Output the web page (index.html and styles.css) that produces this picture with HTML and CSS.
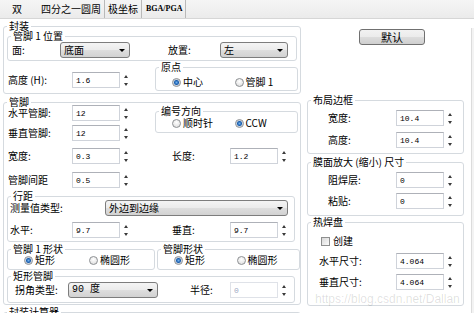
FILE: index.html
```html
<!DOCTYPE html>
<html lang="zh-CN">

<head>
    <meta charset="UTF-8">
    <title>封装向导</title>
    <link rel="stylesheet" href="styles.css">
</head>

<body>

    <div class="tabs">
        <span class="tab tab-first">双</span>
        <span class="tab tab-quarter">四分之一圆周</span>
        <span class="tab tab-polar">极坐标</span>
        <span class="tab tab-bga">BGA/PGA</span>
    </div>

    <div class="page">
        <div class="left">

            <!-- 封装 -->
            <div class="group pkg">
                <div class="group-title">封装</div>
                <div class="pkg-body">
                    <div class="group pos">
                        <div class="group-title">管脚 1 位置</div>
                        <div class="row pos-row">
                            <span class="lbl face-lbl">面:</span>
                            <div class="combo face-combo"><span>底面</span></div>
                            <span class="lbl place-lbl">放置:</span>
                            <div class="combo place-combo"><span>左</span></div>
                        </div>
                    </div>

                    <div class="split">
                        <div class="half height-half">
                            <div class="row">
                                <span class="lbl w64">高度 (H):</span>
                                <input class="num" value="1.6"><span class="spin"></span>
                            </div>
                        </div>
                        <div class="group side origin">
                            <div class="group-title">原点</div>
                            <div class="opts">
                                <span class="opt"><i class="radio on"></i>中心</span>
                                <span class="opt"><i class="radio"></i>管脚 1</span>
                            </div>
                        </div>
                    </div>
                </div>
            </div>

            <!-- 管脚 -->
            <div class="group pins">
                <div class="group-title">管脚</div>
                <div class="pins-body">
                    <div class="split block-a">
                        <div class="half">
                            <div class="row">
                                <span class="lbl w64">水平管脚:</span>
                                <input class="num" value="12"><span class="spin"></span>
                            </div>
                            <div class="row next">
                                <span class="lbl w64">垂直管脚:</span>
                                <input class="num" value="12"><span class="spin"></span>
                            </div>
                        </div>
                        <div class="group side direction">
                            <div class="group-title">编号方向</div>
                            <div class="opts">
                                <span class="opt"><i class="radio"></i>顺时针</span>
                                <span class="opt"><i class="radio on"></i>CCW</span>
                            </div>
                        </div>
                    </div>

                    <div class="row width-row">
                        <span class="lbl w64">宽度:</span>
                        <input class="num" value="0.3"><span class="spin"></span>
                        <span class="lbl far-lbl">长度:</span>
                        <input class="num" value="1.2"><span class="spin"></span>
                    </div>
                    <div class="row pitch-row">
                        <span class="lbl w64">管脚间距</span>
                        <input class="num" value="0.5"><span class="spin"></span>
                    </div>

                    <div class="group pitch">
                        <div class="group-title">行距</div>
                        <div class="pitch-body">
                            <div class="row measure-row">
                                <span class="lbl w95">测量值类型:</span>
                                <div class="combo measure-combo"><span>外边到边缘</span></div>
                            </div>
                            <div class="row offset-row">
                                <span class="lbl w62">水平:</span>
                                <input class="num" value="9.7"><span class="spin"></span>
                                <span class="lbl far-lbl">垂直:</span>
                                <input class="num" value="9.7"><span class="spin"></span>
                            </div>
                        </div>
                    </div>

                    <div class="shapes">
                        <div class="group shape-one">
                            <div class="group-title">管脚 1 形状</div>
                            <div class="opts">
                                <span class="opt"><i class="radio on"></i>矩形</span>
                                <span class="opt"><i class="radio"></i>椭圆形</span>
                            </div>
                        </div>
                        <div class="group side shape-all">
                            <div class="group-title">管脚形状</div>
                            <div class="opts">
                                <span class="opt"><i class="radio on"></i>矩形</span>
                                <span class="opt"><i class="radio"></i>椭圆形</span>
                            </div>
                        </div>
                    </div>

                    <div class="group rect">
                        <div class="group-title">矩形管脚</div>
                        <div class="row rect-row">
                            <span class="lbl w53">拐角类型:</span>
                            <div class="combo corner-combo"><span>90 度</span></div>
                            <span class="lbl radius-lbl">半径:</span>
                            <input class="num off" value="0" disabled><span class="spin"></span>
                        </div>
                    </div>
                </div>
            </div>

            <div class="group calc">
                <div class="group-title">封装计算器</div>
            </div>
        </div>

        <div class="right">
            <div class="btn">默认</div>

            <div class="group layout">
                <div class="group-title">布局边框</div>
                <div class="side-body">
                    <div class="row first">
                        <span class="lbl w68">宽度:</span>
                        <input class="num" value="10.4"><span class="spin"></span>
                    </div>
                    <div class="row gap6">
                        <span class="lbl w68">高度:</span>
                        <input class="num" value="10.4"><span class="spin"></span>
                    </div>
                </div>
            </div>

            <div class="group mask">
                <div class="group-title">膜面放大 (缩小) 尺寸</div>
                <div class="side-body">
                    <div class="row first">
                        <span class="lbl w68">阻焊层:</span>
                        <input class="num" value="0"><span class="spin"></span>
                    </div>
                    <div class="row gap5">
                        <span class="lbl w68">粘贴:</span>
                        <input class="num" value="0"><span class="spin"></span>
                    </div>
                </div>
            </div>

            <div class="group thermal">
                <div class="group-title">热焊盘</div>
                <div class="thermal-body">
                    <div class="check-row"><i class="check"></i>创建</div>
                    <div class="row gap6">
                        <span class="lbl w77">水平尺寸:</span>
                        <input class="num" value="4.064"><span class="spin"></span>
                    </div>
                    <div class="row gap5">
                        <span class="lbl w77">垂直尺寸:</span>
                        <input class="num" value="4.064"><span class="spin"></span>
                    </div>
                </div>
            </div>
        </div>

        <div class="edge"></div>
    </div>

    <div class="watermark">https://blog.csdn.net/Dallan</div>

</body>

</html>
```

FILE: styles.css
```css
body {
    margin: 0;
    width: 474px;
    height: 313px;
    overflow: hidden;
    position: relative;
    background-color: #ffffff;
    font-family: "Noto Sans CJK SC", sans-serif;
    font-size: 10px;
    color: #000;
}

/* tab strip */
.tabs {
    display: flex;
    height: 18px;
    line-height: 18px;
    background: linear-gradient(#f5f5f5, #ebebeb);
    border-bottom: 1px solid #d6d6d6;
}

.tab {
    padding: 0 3px;
    border-right: 1px solid #b9b9b9;
    white-space: nowrap;
}

.tab-first {
    width: 21px;
    padding-left: 12px;
    padding-right: 0;
    border-right: none;
}

.tab-quarter {
    padding-left: 8px;
}

.tab-bga {
    padding-left: 4px;
    font-family: "Liberation Serif", serif;
    font-size: 8px;
    font-weight: bold;
}

.page {
    display: flex;
    align-items: flex-start;
    height: 294px;
    overflow: hidden;
}

.left {
    width: 298px;
    margin-left: 3px;
}

.right {
    width: 158px;
    margin-left: 6px;
}

.edge {
    width: 2px;
    height: 290px;
    margin: 9px 0 0 7px;
    border-left: 1px solid #dcdcdc;
    background-color: #f3f3f3;
}

/* group boxes */
.group {
    border: 1px solid #d5dadf;
    border-radius: 3px;
}

.group-title {
    width: max-content;
    height: 10px;
    line-height: 10px;
    margin: -6px 0 0 3px;
    padding: 0 2px;
    background-color: #fff;
    white-space: nowrap;
}

.pkg {
    margin-top: 7px;
}

.pkg-body {
    padding: 0 3px 2px;
}

.pos {
    margin-top: 5px;
}

.pos-row {
    margin: 1px 0 2px 4px;
}

.split {
    display: flex;
    align-items: flex-start;
}

.half {
    width: 148px;
    flex: none;
}

.height-half {
    padding-top: 11px;
}

.side {
    width: 141px;
    flex: none;
}

.origin {
    margin-top: 6px;
}

.origin .opts {
    margin: 4px 0 2px;
}

.pins {
    margin-top: 8px;
}

.pins-body {
    padding: 0 5px 1px 3px;
}

.block-a {
    margin-top: -2px;
}

.direction {
    margin-top: 6px;
}

.direction .opts {
    margin: 1px 0 3px;
}

.width-row {
    margin-top: 7px;
}

.pitch-row {
    margin-top: 8px;
}

.pitch {
    margin-top: 8px;
}

.pitch-body {
    padding: 0 0 3px 2px;
}

.measure-row {
    margin-top: -1px;
}

.offset-row {
    margin-top: 6px;
}

.shapes {
    display: flex;
    gap: 2px;
    margin-top: 7px;
}

.shape-one {
    width: 146px;
    flex: none;
}

.shapes .opts {
    margin: 0 0 3px;
}

.shape-one .opts {
    padding-left: 16px;
}

.rect {
    margin-top: 6px;
}

.rect-row {
    margin: 1px 0 4px 7px;
}

.calc {
    margin-top: 7px;
    height: 20px;
}

/* rows and fields */
.row {
    display: flex;
    align-items: center;
    height: 16px;
}

.half .row,
.pins-body > .row {
    margin-left: 1px;
}

.row.next {
    margin-top: 4px;
}

.lbl {
    flex: none;
    line-height: 12px;
    white-space: nowrap;
}

.w53 { width: 53px; }
.w62 { width: 62px; }
.w64 { width: 64px; }
.w68 { width: 68px; }
.w77 { width: 77px; }
.w95 { width: 95px; }

.face-lbl {
    width: 48px;
}

.place-lbl {
    width: 52px;
    margin-left: 38px;
}

.far-lbl {
    width: 58px;
    margin-left: 42px;
}

.radius-lbl {
    width: 40px;
    margin-left: 32px;
}

.num {
    width: 48px;
    height: 16px;
    box-sizing: border-box;
    margin: 0;
    padding: 0 3px;
    border: 1px solid #cfd3da;
    border-top-color: #aeb1b8;
    background-color: #fff;
    font-family: "Liberation Mono", monospace;
    font-size: 8px;
    color: #000;
    outline: none;
}

.num.off {
    color: #9eaac4;
    border-color: #dfe2e8;
}

.spin {
    width: 9px;
    height: 16px;
    margin-left: 1px;
    display: flex;
    flex-direction: column;
    align-items: center;
    justify-content: space-around;
    flex: none;
}

.spin::before,
.spin::after {
    content: "";
    border-left: 2px solid transparent;
    border-right: 2px solid transparent;
}

.spin::before {
    border-bottom: 3px solid #3a3a3a;
}

.spin::after {
    border-top: 3px solid #3a3a3a;
}

.combo {
    height: 16px;
    box-sizing: border-box;
    display: flex;
    align-items: center;
    padding-left: 3px;
    border: 1px solid #7d7d7d;
    border-radius: 3px;
    background: linear-gradient(#f4f4f4, #ebebeb 50%, #dedede 50%, #d2d2d2);
    line-height: 12px;
    flex: none;
}

.combo::after {
    content: "";
    margin-left: auto;
    margin-right: 4px;
    border-left: 3px solid transparent;
    border-right: 3px solid transparent;
    border-top: 3px solid #000;
}

.face-combo {
    width: 70px;
}

.place-combo {
    width: 68px;
}

.measure-combo {
    width: 183px;
}

.corner-combo {
    width: 90px;
    font-family: "Liberation Mono", "Noto Sans CJK SC", monospace;
}

/* radios and checkbox */
.opts {
    display: flex;
    height: 12px;
    line-height: 12px;
    align-items: center;
    padding-left: 16px;
}

.opt {
    display: flex;
    align-items: center;
    width: 67px;
    white-space: nowrap;
}

.radio {
    width: 9px;
    height: 9px;
    box-sizing: border-box;
    margin-right: 2px;
    border: 1px solid #8d9093;
    border-radius: 50%;
    background: radial-gradient(circle at 50% 35%, #ffffff, #d9d9d9);
}

.radio.on {
    background: radial-gradient(circle, #6fb0ee 0, #1c5fae 2px, #c9d3df 3px, #f4f4f4 4px);
}

.check-row {
    display: flex;
    align-items: center;
    height: 12px;
    line-height: 12px;
    margin: 8px 0 0 2px;
}

.check {
    width: 9px;
    height: 9px;
    box-sizing: border-box;
    margin-right: 3px;
    border: 1px solid #8e8f8f;
    background: linear-gradient(135deg, #d8d8d8, #fbfbfb);
}

/* right column */
.btn {
    width: 66px;
    height: 16px;
    box-sizing: border-box;
    margin: 10px 0 0 52px;
    border: 1px solid #707070;
    border-radius: 3px;
    background: linear-gradient(#f2f2f2, #ebebeb 50%, #dddddd 50%, #cfcfcf);
    text-align: center;
    line-height: 14px;
    font-size: 11px;
}

.layout {
    margin-top: 55px;
}

.layout .side-body {
    padding-bottom: 5px;
}

.mask {
    margin-top: 8px;
}

.mask .side-body {
    padding-bottom: 6px;
}

.side-body {
    padding-left: 20px;
}

.side-body .first {
    margin-top: 5px;
}

.gap5 {
    margin-top: 5px;
}

.gap6 {
    margin-top: 6px;
}

.thermal {
    margin-top: 6px;
}

.thermal-body {
    padding: 0 0 15px 11px;
}

.watermark {
    position: absolute;
    left: 315px;
    top: 292px;
    font-family: "Liberation Sans", sans-serif;
    font-size: 12px;
    color: rgba(0, 0, 0, 0.13);
    white-space: nowrap;
}
```
